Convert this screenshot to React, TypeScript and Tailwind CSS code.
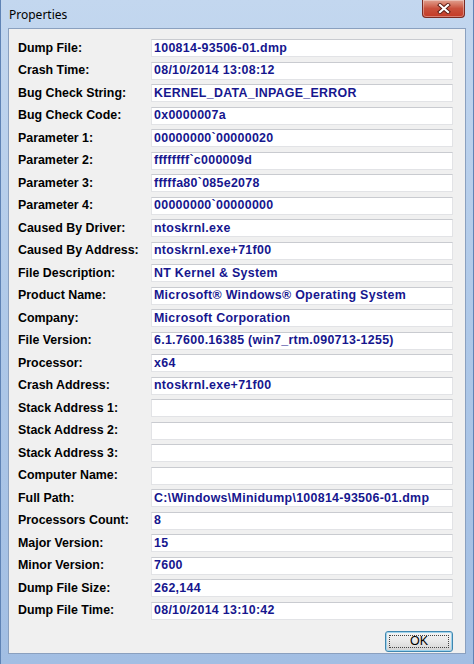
import React from "react";

const rows: [string, string][] = [
  ["Dump File:", "100814-93506-01.dmp"],
  ["Crash Time:", "08/10/2014 13:08:12"],
  ["Bug Check String:", "KERNEL_DATA_INPAGE_ERROR"],
  ["Bug Check Code:", "0x0000007a"],
  ["Parameter 1:", "00000000`00000020"],
  ["Parameter 2:", "ffffffff`c000009d"],
  ["Parameter 3:", "fffffa80`085e2078"],
  ["Parameter 4:", "00000000`00000000"],
  ["Caused By Driver:", "ntoskrnl.exe"],
  ["Caused By Address:", "ntoskrnl.exe+71f00"],
  ["File Description:", "NT Kernel & System"],
  ["Product Name:", "Microsoft® Windows® Operating System"],
  ["Company:", "Microsoft Corporation"],
  ["File Version:", "6.1.7600.16385 (win7_rtm.090713-1255)"],
  ["Processor:", "x64"],
  ["Crash Address:", "ntoskrnl.exe+71f00"],
  ["Stack Address 1:", ""],
  ["Stack Address 2:", ""],
  ["Stack Address 3:", ""],
  ["Computer Name:", ""],
  ["Full Path:", "C:\\Windows\\Minidump\\100814-93506-01.dmp"],
  ["Processors Count:", "8"],
  ["Major Version:", "15"],
  ["Minor Version:", "7600"],
  ["Dump File Size:", "262,144"],
  ["Dump File Time:", "08/10/2014 13:10:42"],
];

function CloseButton() {
  return (
    <div className="absolute right-[8px] top-0 w-[43px] h-[18px] rounded-b-[4px] border border-t-0 border-[#7a2a22] bg-gradient-to-b from-[#e0a08f] via-[#c9503c] to-[#c43a26] flex items-center justify-center shadow-[inset_0_0_0_1px_rgba(255,255,255,0.35)]">
      <svg width="14" height="11" viewBox="0 0 14 11">
        <path d="M3 2 L11 9 M11 2 L3 9" stroke="#5a1a12" strokeWidth="4" strokeLinecap="square" />
        <path d="M3 2 L11 9 M11 2 L3 9" stroke="#ffffff" strokeWidth="2.2" strokeLinecap="square" />
      </svg>
    </div>
  );
}

export default function App() {
  return (
    <div className="relative w-[474px] h-[664px] flex flex-col px-[7px] pb-[10px] bg-gradient-to-b from-[#c3d7ef] via-[#aec8e8] to-[#a2bee3] border-l border-r border-[#5f83b5] font-['Liberation_Sans',Arial,sans-serif]">
      <div className="h-[28px] flex items-center pl-px text-[12px] text-black font-['Noto_Sans',sans-serif] pt-[1px]">
        Properties
      </div>
      <CloseButton />
      <div className="flex-1 flex flex-col bg-[#f0f0f0] border border-[#8aa0bf] pt-[10px] pl-[9px] pr-[12px]">
        <div className="flex flex-col gap-[4.5px]">
          {rows.map(([label, value]) => (
            <div key={label} className="flex items-center h-[18px]">
              <div className="w-[133px] shrink-0 text-[12.4px] font-bold text-black leading-none">
                {label}
              </div>
              <div className="flex-1 h-[18px] bg-white border border-[#e2e3e6] border-t-[#c9cbd0] flex items-center pl-[2px] text-[12.4px] font-bold text-[#16168e] leading-none tracking-[0.3px] whitespace-nowrap overflow-hidden">
                {value}
              </div>
            </div>
          ))}
        </div>
        <div className="flex justify-end mt-[11px]">
          <button className="relative w-[68px] h-[21px] rounded-[3px] border border-[#3f87b0] bg-gradient-to-b from-[#f4f4f4] via-[#e8e8e8] to-[#d2d2d2] shadow-[inset_0_0_0_1px_#9fd3ec] text-[12.5px] text-black leading-none">
            OK
            <span className="absolute inset-[3px] border border-dotted border-[#444]" />
          </button>
        </div>
      </div>
    </div>
  );
}
